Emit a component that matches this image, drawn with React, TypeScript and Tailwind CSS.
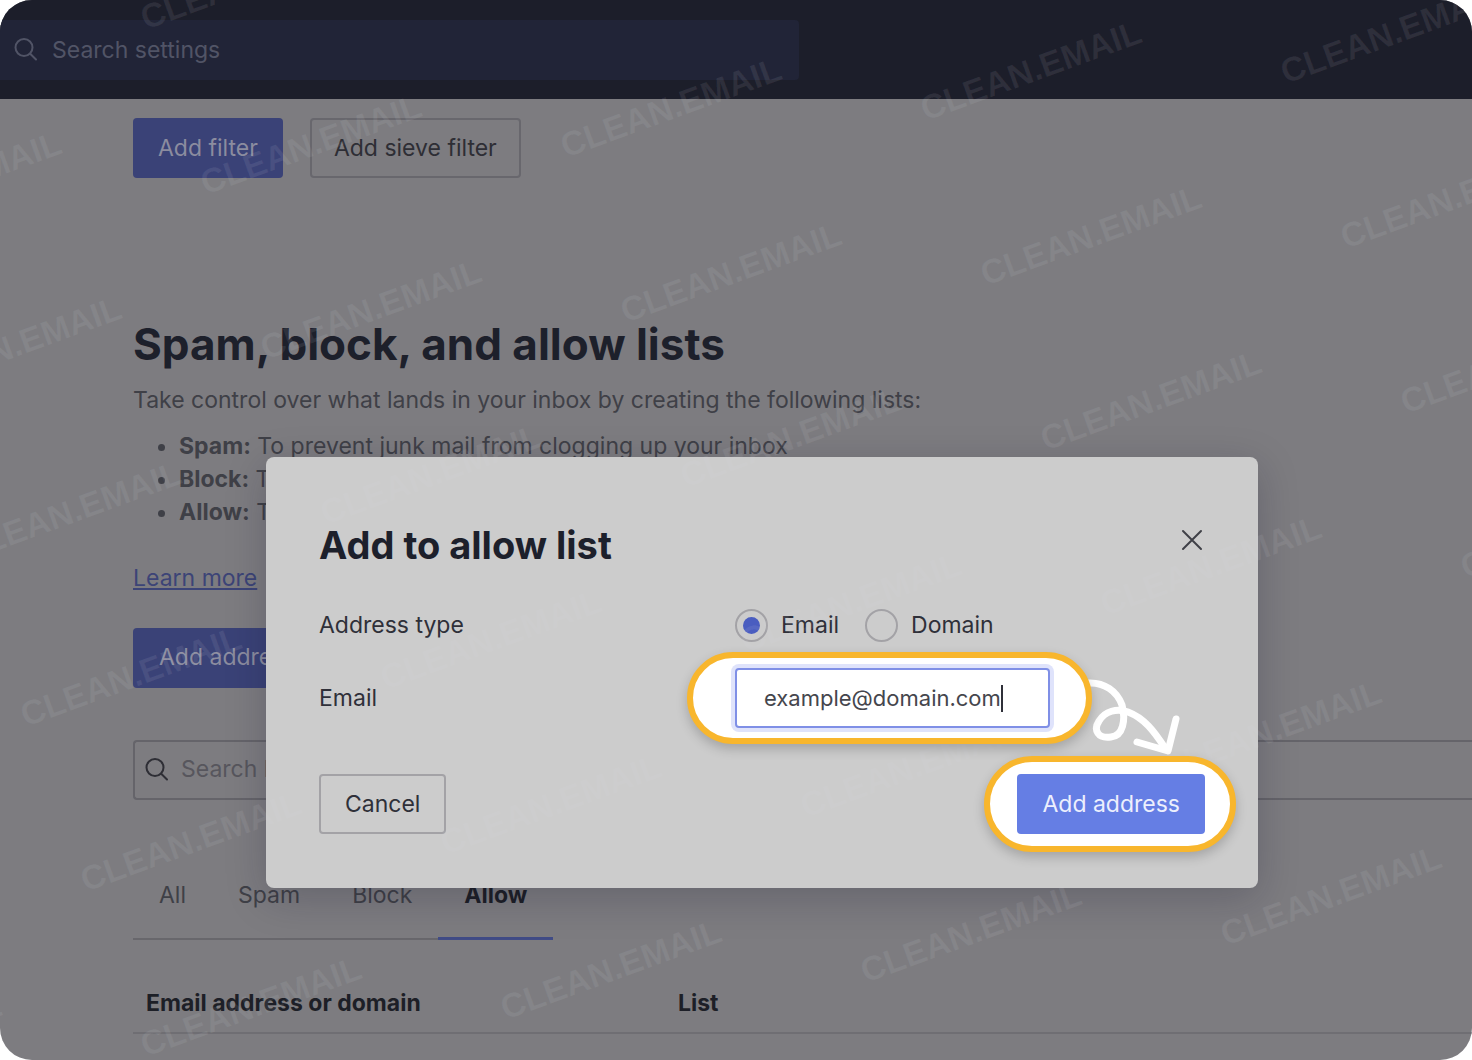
import { useState } from "react";

const WATERMARKS = [-1, 0, 1, 2, 3, 4, 5, 6]
  .flatMap((row) =>
    [-3, -2, -1, 0, 1, 2, 3].map((column) => ({
      left: 146 + row * 60 + column * 360,
      top: 5 + row * 165 - column * 37,
    })),
  )
  .filter(({ left, top }) => left > -230 && left < 1472 && top > -20 && top < 1130);

function SearchIcon() {
  return (
    <svg viewBox="0 0 24 24" className="size-6 shrink-0" fill="none" stroke="currentColor" strokeWidth="2" strokeLinecap="round" aria-hidden="true">
      <circle cx="10" cy="9.5" r="8.5" />
      <path d="M16.2 15.7 22 21.5" />
    </svg>
  );
}

function Watermark() {
  return (
    <div className="pointer-events-none absolute inset-0 z-10 overflow-hidden" aria-hidden="true">
      {WATERMARKS.map(({ left, top }) => (
        <span
          key={`${left}:${top}`}
          className="absolute origin-bottom-left -rotate-20 font-['Liberation_Sans',sans-serif] text-[34px] leading-[26px] font-bold whitespace-nowrap text-[#dcdce2]/9"
          style={{ left, top }}
        >
          CLEAN.EMAIL
        </span>
      ))}
    </div>
  );
}

function SettingsPage() {
  return (
    <>
      <header className="flex h-[99px] items-center bg-[#1c1e2a]">
        <label className="flex h-[60px] w-[799px] items-center gap-3.5 rounded-r bg-[#212437] pl-3.5 text-[#515466]">
          <SearchIcon />
          <input type="search" aria-label="Search settings" placeholder="Search settings" className="min-w-0 flex-1 bg-transparent pt-0.5 outline-none placeholder:text-[#515466]" />
        </label>
      </header>

      <main className="pt-[19px] pb-6 pl-[133px]">
        <div className="flex gap-[27px]">
          <button type="button" className="h-[60px] rounded bg-[#3a4277] px-[25px] text-[#8b8c9f]">Add filter</button>
          <button type="button" className="h-[60px] rounded border-2 border-[#68676d] px-[22px] text-[#2e2e35]">Add sieve filter</button>
        </div>

        <section className="pt-[141px] text-[#3f4047]">
          <h1 className="text-[44px] leading-[50px] font-bold text-[#1d202b]">Spam, block, and allow lists</h1>
          <p className="pt-[15px] leading-[33px]">Take control over what lands in your inbox by creating the following lists:</p>
          <ul className="list-disc pt-[13px] pl-[46px] leading-[33px]">
            <li><b>Spam:</b> To prevent junk mail from clogging up your inbox</li>
            <li><b>Block:</b> To stop mail from being delivered</li>
            <li><b>Allow:</b> To let mail through to your inbox</li>
          </ul>
          <a href="#learn-more" className="mt-[33px] inline-block leading-[33px] text-[#3c4477] underline decoration-2 underline-offset-2">Learn more</a>
          <div className="pt-8">
            <button type="button" className="h-[60px] rounded bg-[#3a4277] px-[26px] text-[#8b8c9f]">Add address or domain</button>
          </div>
        </section>

        <label className="mt-[52px] flex h-[60px] items-center gap-3 rounded-l border-2 border-r-0 border-[#65646a] pl-[10px] text-[#2e2e35]">
          <SearchIcon />
          <input type="search" aria-label="Search lists" placeholder="Search lists" className="min-w-0 flex-1 bg-transparent outline-none placeholder:text-[#57565d]" />
        </label>

        <nav className="mt-[70px] flex w-fit border-b-2 border-[#68676c]" aria-label="Lists">
          {["All", "Spam", "Block"].map((name) => (
            <button key={name} type="button" className="px-[26px] pb-[18px] leading-[50px] text-[#3f4047]">{name}</button>
          ))}
          <button type="button" aria-current="true" className="-mb-0.5 border-b-3 border-[#414c86] px-[26px] pb-[17px] leading-[50px] font-bold text-[#1d1f27]">Allow</button>
        </nav>

        <table className="mt-[35px] w-full table-fixed text-left text-[#1d1f27]">
          <thead className="border-b-2 border-[#6f6e73]">
            <tr>
              <th className="w-[532px] py-3 pl-[13px] leading-[33px] font-bold">Email address or domain</th>
              <th className="py-3 pl-[13px] leading-[33px] font-bold">List</th>
            </tr>
          </thead>
        </table>
      </main>
    </>
  );
}

function LoopArrow() {
  return (
    <svg viewBox="0 0 100 84" className="absolute top-[26px] left-full -ml-1.5 h-[84px] w-[100px]" fill="none" stroke="#fff" strokeWidth="7" strokeLinecap="round" strokeLinejoin="round" aria-hidden="true">
      <path d="M2 5C18 4 31 13 36 27C40 42 37 58 25 59C12 61 7 52 13 43C19 33 31 30 42 34C58 40 68 53 79 70" />
      <path d="M90 41 82 73 51 64" />
    </svg>
  );
}

const RADIO =
  "relative size-[33px] shrink-0 appearance-none rounded-full border-2 border-[#a3a2a6] checked:before:absolute checked:before:inset-1.5 checked:before:rounded-full checked:before:bg-[#4a5dc0] checked:before:content-['']";
const CAPSULE = "relative z-20 rounded-full border-6 border-[#f8b62d] bg-white shadow-[0_5px_12px_rgba(0,0,0,0.2)]";

function AllowListDialog() {
  const [type, setType] = useState("email");
  const [email, setEmail] = useState("example@domain.com");

  return (
    <div className="absolute inset-0 flex items-start justify-center pt-[457px] pl-[52px]">
      <form
        role="dialog"
        aria-labelledby="dialog-title"
        onSubmit={(event) => event.preventDefault()}
        className="w-full max-w-[992px] rounded-lg bg-[#cccccc] pt-[61px] pb-9 pl-[53px] text-[#2f3039] shadow-[0_10px_40px_rgba(20,20,40,0.22)]"
      >
        <div className="flex items-start justify-between pr-[55px]">
          <h2 id="dialog-title" className="text-[38px] leading-[54px] font-bold text-[#1d202b]">Add to allow list</h2>
          <button type="button" aria-label="Close" className="mt-[11px]">
            <svg viewBox="0 0 22 22" className="size-[22px]" fill="none" stroke="#3f4047" strokeWidth="2" strokeLinecap="round" aria-hidden="true">
              <path d="M2 2 20 20M20 2 2 20" />
            </svg>
          </button>
        </div>

        <fieldset className="mt-[37px] flex h-[33px] items-center">
          <legend className="float-left w-[416px]">Address type</legend>
          <label className="mr-[26px] flex items-center gap-[13px]">
            <input type="radio" name="type" className={RADIO} checked={type === "email"} onChange={() => setType("email")} />
            Email
          </label>
          <label className="flex items-center gap-[13px]">
            <input type="radio" name="type" className={RADIO} checked={type === "domain"} onChange={() => setType("domain")} />
            Domain
          </label>
        </fieldset>

        <div className="mt-2.5 flex items-center">
          <label htmlFor="email" className="w-[368px] shrink-0">Email</label>
          <div className="relative z-20">
            <LoopArrow />
            <div className={`${CAPSULE} w-[405px] py-2.5 pr-9 pl-[42px]`}>
              <div className="flex h-[60px] items-center rounded border-2 border-[#7f8fe6] bg-white pl-[27px] ring-4 ring-[#dfe3fb]">
                <input id="email" type="text" value={email} onChange={(event) => setEmail(event.target.value)} className="[field-sizing:content] bg-transparent text-[22px] text-[#45464d] outline-none" />
                <span className="h-[27px] w-0.5 bg-[#2f3039]" />
              </div>
            </div>
          </div>
        </div>

        <div className="mt-3 flex items-center justify-between pr-[22px]">
          <button type="button" className="h-[60px] rounded border-2 border-[#a3a2a6] px-6">Cancel</button>
          <div className={`${CAPSULE} py-3 pr-[25px] pl-[27px]`}>
            <button type="submit" className="h-[60px] rounded bg-[#657ee4] px-[25px] text-[#eceffd]">Add address</button>
          </div>
        </div>
      </form>
    </div>
  );
}

export default function App() {
  return (
    <div className="relative min-h-screen overflow-hidden rounded-[32px] bg-[#7d7c80] font-['Inter',sans-serif] text-[23px]">
      <SettingsPage />
      <AllowListDialog />
      <Watermark />
    </div>
  );
}
